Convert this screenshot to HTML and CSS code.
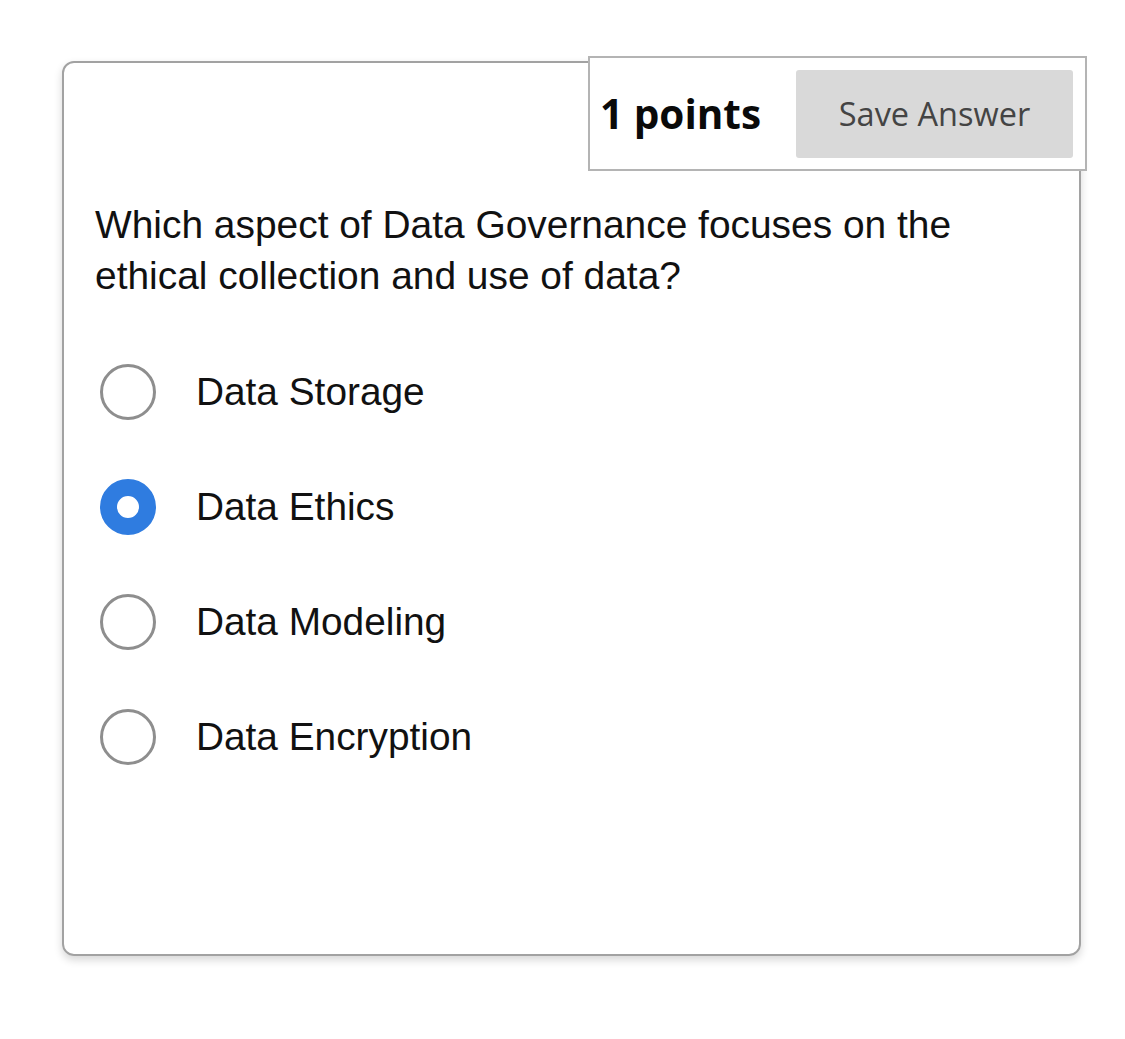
FILE: index.html
```html
<html>
<head>
  <title>Question</title>
  <link rel="stylesheet" href="styles.css">
</head>
<body>
  <div class="card">
    <div class="points-box">
      <span class="points">1 points</span>
      <button class="save-btn" type="button">Save Answer</button>
    </div>

    <div class="question">Which aspect of Data Governance focuses on the ethical collection and use of data?</div>

    <div class="options">
      <label class="option"><span class="radio"></span><span class="label">Data Storage</span></label>
      <label class="option"><span class="radio checked"></span><span class="label">Data Ethics</span></label>
      <label class="option"><span class="radio"></span><span class="label">Data Modeling</span></label>
      <label class="option"><span class="radio"></span><span class="label">Data Encryption</span></label>
    </div>
  </div>
</body>
</html>
```

FILE: styles.css
```css
body{
    margin:0;
    background:#fff;
    font-family:"Liberation Sans", Arial, sans-serif;
    color:#111;
}

.card{
    position:relative;
    box-sizing:border-box;
    width:1019px;
    margin:61px 0 0 62px;
    border:2px solid #a2a2a2;
    border-radius:12px;
    padding:136px 40px 189px 31px;
    box-shadow:0 4px 8px rgba(0,0,0,.16);
}

/* points + save button, sits over the corner */
.points-box{
    position:absolute;
    top:-7px;
    right:-8px;
    box-sizing:border-box;
    width:499px;
    height:115px;
    display:flex;
    align-items:center;
    justify-content:space-between;
    padding:0 12px 0 10px;
    background:#fff;
    border:2px solid #b4b4b4;
    font-family:"Open Sans", sans-serif;
}

.points{
    font-size:40.5px;
    font-weight:bold;
    color:#0a0a0a;
}

.save-btn{
    width:277px;
    height:88px;
    border:0;
    border-radius:3px;
    background:#d9d9d9;
    color:#444;
    font-family:"Open Sans", sans-serif;
    font-size:32.5px;
}

.question{
    font-size:38.9px;
    line-height:51px;
    color:#111;
    width:900px;
}

.options{
    display:flex;
    flex-direction:column;
    gap:59px;
    margin-top:63px;
}

.option{
    display:flex;
    align-items:center;
    gap:40px;
    padding-left:5px;
}

.radio{
    box-sizing:border-box;
    width:56px;
    height:56px;
    border:3px solid #8e8e8e;
    border-radius:50%;
    background:#fff;
    flex:none;
}

.radio.checked{
    border:17px solid #2f7ce0;
}

.label{
    font-size:38.8px;
    color:#111;
}
```
